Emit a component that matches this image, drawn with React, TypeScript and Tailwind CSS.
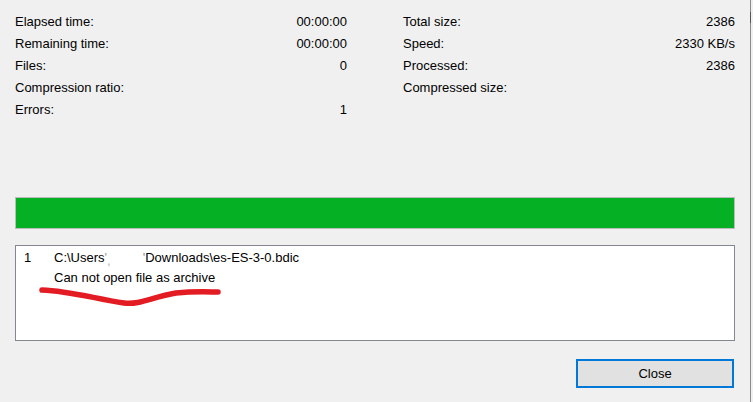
const leftStats: [string, string][] = [
  ['Elapsed time:', '00:00:00'],
  ['Remaining time:', '00:00:00'],
  ['Files:', '0'],
  ['Compression ratio:', ''],
  ['Errors:', '1'],
];

const rightStats: [string, string][] = [
  ['Total size:', '2386'],
  ['Speed:', '2330 KB/s'],
  ['Processed:', '2386'],
  ['Compressed size:', ''],
];

const StatColumn = ({ rows }: { rows: [string, string][] }) => (
  <div className="flex flex-col">
    {rows.map(([label, value]) => (
      <div key={label} className="flex h-[22px] items-center justify-between leading-[22px]">
        <span>{label}</span>
        <span>{value}</span>
      </div>
    ))}
  </div>
);

export default function App() {
  return (
    <div className="flex h-[402px] w-[753px] overflow-hidden bg-[#f0f0f0] font-['Liberation_Sans',Arial,sans-serif] text-[13px] text-black">
      <div className="relative flex w-[750px] flex-col pl-[15px] pr-[15px] pt-[11px]">
        <div className="grid grid-cols-[332px_1fr] gap-x-[56px]">
          <StatColumn rows={leftStats} />
          <StatColumn rows={rightStats} />
        </div>

        {/* progress */}
        <div className="mt-[76px] h-[32px] border border-[#bcbcbc] bg-[#06b025]" />

        {/* error list */}
        <div className="mt-[16px] h-[96px] border border-[#828790] bg-white pl-[8px] pt-[2px]">
          <div className="grid grid-cols-[30px_1fr] leading-[20px]">
            <span>1</span>
            <span className="whitespace-pre">
              C:\Users<span className="text-[#9a9a9a]">'</span>
              <span className="relative top-[3px] text-[#b0b0b0]">,</span>
              <span className="inline-block w-[32px]" />
              <span className="text-[#8a8a8a]">'</span>Downloads\es-ES-3-0.bdic
            </span>
            <span />
            <span>Can not open file as archive</span>
          </div>
        </div>

        <button className="mr-[1px] mt-[18px] h-[29px] w-[158px] self-end border-2 border-[#0078d7] bg-[#e1e1e1] leading-none">
          Close
        </button>

        {/* hand-drawn red mark */}
        <svg className="pointer-events-none absolute left-0 top-0" width="750" height="402">
          <path
            d="M42 290 C 70 291, 96 299, 124 303 C 140 305, 152 297, 176 293 C 196 291, 210 292, 218 292"
            fill="none"
            stroke="#e31b23"
            strokeWidth="5.5"
            strokeLinecap="round"
          />
        </svg>
      </div>
      <div className="relative w-px bg-[#8a8a8a]">
        <div className="absolute left-0 top-[12px] h-[11px] w-px bg-[#555]" />
      </div>
      <div className="flex-1" />
    </div>
  );
}
